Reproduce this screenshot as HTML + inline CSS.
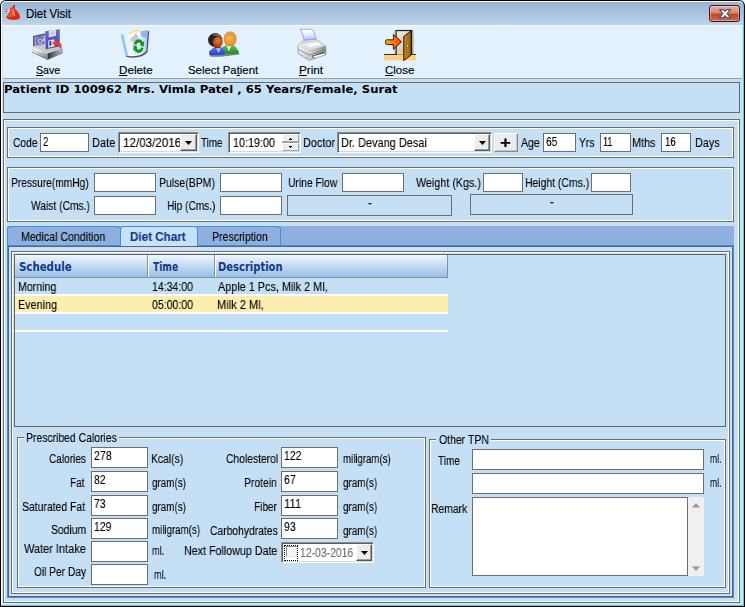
<!DOCTYPE html>
<html><head><meta charset="utf-8"><title>Diet Visit</title>
<style>
html,body{margin:0;padding:0;}
body{width:745px;height:607px;overflow:hidden;position:relative;background:#eef2fa;font-family:"Liberation Sans",sans-serif;font-size:12.5px;color:#000;}
.a{position:absolute;box-sizing:border-box;}
.t{position:absolute;white-space:nowrap;transform-origin:0 0;display:block;}
.m{-webkit-text-stroke:0.12px currentColor;will-change:transform;}
.c{-webkit-text-stroke:0.15px currentColor;}
.t u{text-decoration:underline;text-underline-offset:1px;}
.gw{border:1px solid #6c6c6c;box-shadow:inset 1px 1px 0 #fff,inset -1px -1px 0 #fff;}
.in{background:#fff;border:1px solid #6e6e6e;}
.sunk{background:#fff;border:1px solid;border-color:#8c8c8c #fff #fff #8c8c8c;box-shadow:inset 1px 1px 0 #5f5f5f,inset -1px -1px 0 #d8d8d8;}
.btn{background:#ececec;border:1px solid;border-color:#fff #5a5a5a #5a5a5a #fff;box-shadow:inset -1px -1px 0 #9c9c9c;}
.sbtn{background:#ececec;border:1px solid;border-color:#fff #a8a8a8 #a8a8a8 #fff;}
.btn2{background:#ececec;border:1px solid;border-color:#fff #8a8a8a #8a8a8a #fff;box-shadow:inset -1px -1px 0 #c4c4c4;}
.lbl{background:#c5dff5;border:1px solid #6e6e6e;}
</style></head><body>
<!-- window frame -->
<div class="a" style="left:0;top:0;width:745px;height:607px;background:#000;border-radius:6px 6px 0 0;"></div>
<div class="a" style="left:1px;top:1px;width:743px;height:605px;background:#3fd0f0;border-radius:5px 5px 0 0;"></div>
<div class="a" style="left:1px;top:1px;width:742px;height:604px;background:#fff;border-radius:5px 4px 0 0;"></div>
<div class="a" style="left:2px;top:2px;width:741px;height:603px;background:#d3e4f6;border-radius:4px 4px 0 0;"></div>
<!-- title bar -->
<div class="a" style="left:2px;top:2px;width:741px;height:23px;background:linear-gradient(#98b4d4,#bdd4eb);border-radius:4px 4px 0 0;"></div>
<div class="a" style="left:2px;top:25px;width:741px;height:1px;background:#f4f9fe;"></div>
<!-- app icon -->
<svg class="a" style="left:5px;top:4px" width="16" height="16" viewBox="0 0 16 16"><path d="M1.2 13.4 L2.8 10.6 L4.4 8.2 L4.8 5.6 L5.6 3.2 L6.8 4 L8.6 1 L10.2 1.4 L9.6 4 L10.8 6.4 L12.6 7.4 L14.2 10 L15.2 13 L14 15.2 L8 15.9 L3.4 15.2 Z" fill="#dc2a0c"/><path d="M5.4 4.6 L9 4.8 L9.6 7.8 L10.4 11.8 L8.4 12.6 L6.4 8.4 Z" fill="#ff8a8a" opacity=".85"/><path d="M5.6 5.4h2.6v.8h-2.6z M5.8 7h1.6v.7h-1.6z" fill="#e83030"/><path d="M2.2 11.6 L5.8 8.6 L7.4 12.6 L4 13.6Z" fill="#ec6a2a" opacity=".75"/><path d="M3.2 5.6 L4.6 5.2 L4.4 8.4 L3.4 8.6Z" fill="#f6e4dc"/><path d="M8.4 1.2 L10.2 1.4 L9.8 2.8 L8.8 2.6Z" fill="#b43c08"/><circle cx="1.3" cy="5.3" r=".7" fill="#e0501c"/><circle cx="1.3" cy="7.4" r=".7" fill="#c8440c"/><path d="M10.2 5.6 L12 6 L10.6 6.8Z" fill="#e8401c"/><path d="M11 9 L12.6 8.6 L13 10 L11.4 10.4Z" fill="#c4540c" opacity=".8"/></svg>
<!-- close button -->
<div class="a" style="left:709px;top:5px;width:31px;height:17px;border:1px solid #43161e;border-radius:3px;background:linear-gradient(#e8aea0 0%,#d88472 47%,#c0442a 53%,#cf6a4c 100%);box-shadow:inset 0 0 0 1px rgba(255,255,255,.35);"></div>
<svg class="a" style="left:716.6px;top:7.6px" width="16" height="12" viewBox="0 0 16 12"><path d="M2.6 1.6 L6.3 1.6 L8 3.4 L9.7 1.6 L13.4 1.6 L10.1 5.6 L13.6 9.8 L9.8 9.8 L8 7.8 L6.2 9.8 L2.4 9.8 L5.9 5.6 Z" fill="#fff" stroke="#4a5066" stroke-width="1.1" stroke-linejoin="round"/></svg>
<!-- toolbar -->
<div class="a" style="left:3px;top:26px;width:739px;height:52px;background:#e2f1fc;"></div>
<div class="a" style="left:3px;top:78px;width:739px;height:1px;background:#9f9f9f;"></div>
<div class="a" style="left:3px;top:79px;width:739px;height:524px;background:#c5dff5;"></div>
<!-- save icon -->
<svg class="a" style="left:28px;top:26px" width="40" height="36" viewBox="0 0 674 607">
<defs>
<linearGradient id="sv1" x1="0" y1="0" x2="0.4" y2="1"><stop offset="0" stop-color="#d8d8d8"/><stop offset="0.35" stop-color="#f6f6f6"/><stop offset="0.75" stop-color="#b4b4b4"/><stop offset="1" stop-color="#8c8c8c"/></linearGradient>
<linearGradient id="sv2" x1="0" y1="0" x2="1" y2="0"><stop offset="0" stop-color="#303030"/><stop offset="0.6" stop-color="#8a8a8a"/><stop offset="1" stop-color="#c4c4cc"/></linearGradient>
<linearGradient id="sv3" x1="0" y1="0" x2="0" y2="1"><stop offset="0" stop-color="#6868cc"/><stop offset="1" stop-color="#4646b6"/></linearGradient>
</defs>
<path d="M84 168 L290 122 L290 350 L84 345Z" fill="#5c5c66"/>
<path d="M106 190 L290 150 L290 345 L106 335Z" fill="#9696d4"/>
<ellipse cx="205" cy="258" rx="60" ry="66" fill="#a8a8dc" stroke="#6868b0" stroke-width="26"/>
<ellipse cx="205" cy="258" rx="16" ry="18" fill="#5c5ca8"/>
<path d="M232 250 L286 172 L290 262Z" fill="#c0c0ea"/>
<path d="M70 345 L300 300 L585 375 L330 465Z" fill="#cacace"/>
<path d="M70 345 L330 465 L330 565 L70 440Z" fill="url(#sv1)"/>
<path d="M330 465 L585 375 L585 452 L330 565Z" fill="url(#sv2)"/>
<path d="M70 398 L330 520" stroke="#9a9a9a" stroke-width="9"/>
<path d="M585 380 L585 452 L540 472 L540 396Z" fill="#a4a4e2"/>
<path d="M66 438 L330 568 L588 452" fill="none" stroke="#2c2c2c" stroke-width="13" stroke-dasharray="30 14" opacity=".85"/>
<path d="M290 90 L535 55 L535 345 L300 390Z" fill="url(#sv3)"/>
<path d="M350 80 L470 62 L470 165 L350 188Z" fill="#e8e8e8"/>
<path d="M366 100 L455 88 L455 142 L366 156Z" fill="#cdcdcd"/>
<path d="M340 245 L445 225 L445 345 L340 368Z" fill="#dadae2"/>
<path d="M362 258 L392 252 L392 328 L362 334Z" fill="#2a2a9c"/>
<path d="M405 290 L478 238 L478 272 C540 262 585 300 560 385 L528 372 C545 320 520 305 478 312 L478 342Z" fill="#ff3a12"/>
</svg>
<!-- delete icon -->
<svg class="a" style="left:115px;top:26px" width="40" height="36" viewBox="0 0 674 607">
<defs>
<linearGradient id="dl1" x1="0" y1="0" x2="1" y2="0"><stop offset="0" stop-color="#8cc0f4"/><stop offset="0.12" stop-color="#c4e2fa"/><stop offset="0.35" stop-color="#f4fbff"/><stop offset="0.7" stop-color="#e2f2fd"/><stop offset="1" stop-color="#a2caf2"/></linearGradient>
</defs>
<path d="M118 165 L578 84 L550 428 C520 505 330 562 188 518Z" fill="#3c3c3c" opacity=".85"/>
<path d="M100 150 L555 68 L530 415 C500 480 330 540 175 495Z" fill="url(#dl1)"/>
<path d="M425 92 L550 70 L528 205 L445 172Z" fill="#8cb6f0"/>
<path d="M222 108 L410 52 L434 165 L292 262 L240 192Z" fill="#fffbe6"/>
<path d="M222 108 L410 52 L414 82 L232 136Z" fill="#ffd98a"/>
<path d="M238 170 L322 182 L292 260Z" fill="#fff0a4"/>
<path d="M352 118 L394 184 L345 482 L222 272Z" fill="#c8c2e8"/>
<path d="M296 250 L345 482 L222 272Z" fill="#eceaf6"/>
<path d="M100 150 L140 143 L225 500 L175 495Z" fill="#8ec2f4" opacity=".9"/>
<path d="M140 143 L230 130 L330 490 L225 500Z" fill="#e8f5fe" opacity=".75"/>
<g transform="translate(400 338) scale(0.95 1.3) translate(-400 -335)"><g fill="none" stroke="#0a9a12" stroke-width="42"><path d="M336 312 A68 68 0 0 1 459 301"/><path d="M464 358 A68 68 0 0 1 341 369"/></g>
<path d="M486 345 L418 322 L498 270Z M314 325 L382 348 L302 400Z" fill="#0a9a12"/></g>
</svg>
<!-- people icon -->
<svg class="a" style="left:203px;top:26px" width="40" height="36" viewBox="0 0 674 607">
<defs>
<radialGradient id="pp1" cx=".45" cy=".4" r=".6"><stop offset="0" stop-color="#ffb458"/><stop offset="1" stop-color="#f08c1c"/></radialGradient>
<radialGradient id="pp2" cx=".5" cy=".35" r=".65"><stop offset="0" stop-color="#ee7a28"/><stop offset="1" stop-color="#a43c08"/></radialGradient>
<linearGradient id="pp3" x1="0" y1="0" x2="0" y2="1"><stop offset="0" stop-color="#5a78f4"/><stop offset="1" stop-color="#1c3cd0"/></linearGradient>
<linearGradient id="pp4" x1="0" y1="0" x2="0" y2="1"><stop offset="0" stop-color="#5cc45c"/><stop offset="1" stop-color="#1c8c24"/></linearGradient>
</defs>
<path d="M120 480 L610 455 L610 480 L300 520 L130 520Z" fill="#5a5a5a" opacity=".75"/>
<path d="M330 350 L405 322 L505 322 L545 345 L600 425 L600 468 L355 472Z" fill="url(#pp4)"/>
<path d="M400 330 L482 330 L432 425Z" fill="#fafffa"/>
<rect x="357" y="100" width="200" height="238" rx="92" ry="105" fill="url(#pp1)" stroke="#b87a24" stroke-width="9"/>
<path d="M360 190 C360 120 410 98 457 98 C505 98 555 120 555 190 C500 165 420 165 360 190Z" fill="#d6a04c"/>
<path d="M105 425 L185 360 L330 360 L362 425 L362 482 L105 492Z" fill="url(#pp3)"/>
<path d="M212 370 L298 370 L266 452Z" fill="#a4d4fa"/>
<path d="M200 350 L290 350 L290 375 L200 375Z" fill="#8c1c08"/>
<ellipse cx="205" cy="238" rx="120" ry="118" fill="#242424"/>
<path d="M150 150 C200 110 280 110 320 200 C250 160 200 170 150 150Z" fill="#6a6a6a"/>
<ellipse cx="250" cy="272" rx="82" ry="90" fill="url(#pp2)"/>
</svg>
<!-- print icon -->
<svg class="a" style="left:292px;top:26px" width="40" height="36" viewBox="0 0 674 607">
<defs>
<linearGradient id="pr1" x1="0" y1="0" x2="0" y2="1"><stop offset="0" stop-color="#ffffff"/><stop offset="0.4" stop-color="#eef2ff"/><stop offset="1" stop-color="#a8bcff"/></linearGradient>
<linearGradient id="pr2" x1="0" y1="0" x2="1" y2="1"><stop offset="0" stop-color="#fafafa"/><stop offset="1" stop-color="#c2c2c2"/></linearGradient>
<linearGradient id="pr3" x1="0" y1="0" x2="1" y2="0"><stop offset="0" stop-color="#d2d2d2"/><stop offset="1" stop-color="#8e8e8e"/></linearGradient>
<linearGradient id="pr4" x1="0" y1="0" x2="1" y2="1"><stop offset="0" stop-color="#f4f4f4"/><stop offset="1" stop-color="#cccccc"/></linearGradient>
</defs>
<path d="M172 240 L420 212 L445 262 L190 295Z" fill="#ececec" stroke="#9a9a9a" stroke-width="8"/>
<path d="M135 55 L335 55 C385 100 385 170 402 222 L205 242 C190 170 180 110 135 55Z" fill="url(#pr1)" stroke="#6464c4" stroke-width="9"/>
<path d="M106 330 C110 298 150 286 180 282 L440 245 L566 338 L290 424Z" fill="url(#pr4)" stroke="#7a7a7a" stroke-width="6"/>
<path d="M250 300 L430 272 L500 320 L300 360Z" fill="#f6f6f6"/>
<path d="M105 328 L290 422 L290 572 L105 462Z" fill="url(#pr2)"/>
<path d="M290 422 L566 338 L566 482 L290 572Z" fill="url(#pr3)"/>
<path d="M105 394 L290 490 L566 404" fill="none" stroke="#5e5e5e" stroke-width="10"/>
<path d="M340 500 L540 440 L540 470 L340 532Z" fill="#3a3a3a"/>
<path d="M352 512 L540 458 L562 488 L392 552Z" fill="#f6f6f6"/>
<path d="M338 508 L392 552" stroke="#6464d4" stroke-width="12"/>
<path d="M490 390 L526 380 L526 416 L490 426Z" fill="#44c444"/>
<path d="M102 330 L102 464 L290 578 L570 486 L570 340" fill="none" stroke="#4a4a4a" stroke-width="9" stroke-linejoin="round" opacity=".85"/>
</svg>
<!-- close icon -->
<svg class="a" style="left:380px;top:26px" width="40" height="36" viewBox="0 0 674 607">
<defs>
<linearGradient id="cl1" x1="0" y1="0" x2="1" y2="1"><stop offset="0" stop-color="#f0ece0"/><stop offset="1" stop-color="#bcb8ac"/></linearGradient>
<linearGradient id="cl2" x1="0" y1="0" x2="1" y2="0"><stop offset="0" stop-color="#ffb400"/><stop offset="1" stop-color="#ff3c10"/></linearGradient>
<linearGradient id="cl3" x1="0" y1="0" x2="1" y2="0"><stop offset="0" stop-color="#c08420"/><stop offset="1" stop-color="#9c640c"/></linearGradient>
<pattern id="clp" width="34" height="34" patternUnits="userSpaceOnUse"><rect width="34" height="34" fill="#ffe8c4"/><rect width="17" height="17" fill="#ffb548"/><rect x="17" y="17" width="17" height="17" fill="#ffb548"/></pattern>
</defs>
<rect x="240" y="62" width="332" height="415" fill="#c4c4c4"/>
<rect x="65" y="480" width="540" height="100" fill="url(#clp)"/>
<rect x="285" y="430" width="120" height="55" fill="url(#clp)"/>
<rect x="272" y="78" width="262" height="395" fill="url(#cl1)" stroke="#000" stroke-width="16"/>
<rect x="285" y="430" width="115" height="50" fill="url(#clp)"/>
<path d="M65 480 L282 480 M530 480 L605 480" stroke="#000" stroke-width="14"/>
<path d="M130 320 L235 320 L235 400 L280 360 L250 340Z" fill="#9a9a9a" opacity=".7"/>
<path d="M110 232 Q92 232 92 272 Q92 312 110 312 L226 312 L226 392 L362 266 L226 142 L226 232Z" fill="url(#cl2)" stroke="#000" stroke-width="13" stroke-linejoin="round"/>
<path d="M400 176 L525 82 L525 490 L400 584Z" fill="url(#cl3)" stroke="#000" stroke-width="14" stroke-linejoin="round"/>
<ellipse cx="462" cy="336" rx="17" ry="24" fill="#f2f29c" stroke="#3c2c00" stroke-width="8"/>
</svg>

<!-- patient box -->
<div class="a" style="left:3px;top:82px;width:737px;height:31px;border:1px solid #6a6a6a;"></div>
<!-- outer panel -->
<div class="a gw" style="left:3px;top:119px;width:737px;height:484px;"></div>
<!-- group 1 -->
<div class="a gw" style="left:7px;top:127px;width:727px;height:31px;"></div>
<div class="a in" style="left:40px;top:133px;width:49px;height:19px;"></div>
<div class="a sunk" style="left:118px;top:132px;width:81px;height:21px;"></div>
<div class="a btn" style="left:180px;top:134px;width:17px;height:17px;z-index:5;"></div>
<svg class="a" style="left:185px;top:141px;z-index:6" width="7" height="4"><path d="M0 0h7l-3.5 4z" fill="#000"/></svg>
<div class="a sunk" style="left:228px;top:132px;width:73px;height:21px;"></div>
<div class="a" style="left:282px;top:134px;width:17px;height:17px;background:#9a9a9a;"></div>
<div class="a sbtn" style="left:282px;top:134px;width:17px;height:8px;"></div>
<div class="a sbtn" style="left:282px;top:143px;width:17px;height:8px;"></div>
<svg class="a" style="left:289px;top:138px" width="3" height="2"><path d="M1 0h1v1h1v1h-3v-1h1z" fill="#000"/></svg>
<svg class="a" style="left:289px;top:146px" width="3" height="2"><path d="M0 0h3v1h-1v1h-1v-1h-1z" fill="#000"/></svg>
<div class="a sunk" style="left:337px;top:132px;width:155px;height:21px;"></div>
<div class="a btn" style="left:474px;top:134px;width:16px;height:17px;"></div>
<svg class="a" style="left:479px;top:141px" width="7" height="4"><path d="M0 0h7l-3.5 4z" fill="#000"/></svg>
<div class="a btn2" style="left:494px;top:133px;width:24px;height:19px;"></div>

<div class="a in" style="left:543px;top:133px;width:33px;height:19px;"></div>
<div class="a in" style="left:600px;top:133px;width:31px;height:19px;"></div>
<div class="a in" style="left:661px;top:133px;width:30px;height:19px;"></div>
<!-- group 2 -->
<div class="a gw" style="left:7px;top:167px;width:727px;height:55px;"></div>
<div class="a in" style="left:94px;top:173px;width:62px;height:19px;"></div>
<div class="a in" style="left:220px;top:173px;width:62px;height:19px;"></div>
<div class="a in" style="left:342px;top:173px;width:62px;height:19px;"></div>
<div class="a in" style="left:483px;top:173px;width:40px;height:19px;"></div>
<div class="a in" style="left:591px;top:173px;width:40px;height:19px;"></div>
<div class="a in" style="left:94px;top:196px;width:62px;height:19px;"></div>
<div class="a in" style="left:220px;top:196px;width:62px;height:19px;"></div>
<div class="a lbl" style="left:287px;top:195px;width:165px;height:21px;"></div>
<div class="a lbl" style="left:470px;top:194px;width:163px;height:21px;"></div>
<!-- tab strip -->
<div class="a" style="left:7px;top:226px;width:727px;height:20px;background:#8fb0de;"></div>
<div class="a" style="left:7px;top:226px;width:114px;height:20px;border:1px solid #3a8ff0;border-bottom:none;border-radius:4px 4px 0 0;"></div>
<div class="a" style="left:197px;top:226px;width:84px;height:20px;border:1px solid #3a8ff0;border-bottom:none;border-left:none;border-radius:0 4px 0 0;"></div>
<!-- tab page -->
<div class="a" style="left:7px;top:245px;width:727px;height:353px;border:1px solid #3a8ff0;box-shadow:inset 0 0 0 1px #646464;background:#c8e1f7;"></div>
<div class="a" style="left:120px;top:226px;width:78px;height:20px;border:1px solid #3a8ff0;border-bottom:none;border-radius:4px 4px 0 0;background:#c9e1f7;"></div>
<!-- inner panel -->
<div class="a gw" style="left:11px;top:251px;width:719px;height:343px;background:#c5dff5;"></div>
<!-- grid -->
<div class="a" style="left:14px;top:254px;width:712px;height:173px;border:1px solid #646464;background:#c5dff5;"></div>
<div class="a" style="left:15px;top:255px;width:433px;height:23px;background:linear-gradient(#eff5fc 0%,#c6dbf3 48%,#95c0ec 100%);border-bottom:1px solid #8e8e8e;border-right:1px solid #8e8e8e;"></div>
<div class="a" style="left:147px;top:255px;width:2px;height:22px;border-left:1px solid #8e8e8e;border-right:1px solid #fff;"></div>
<div class="a" style="left:214px;top:255px;width:2px;height:22px;border-left:1px solid #8e8e8e;border-right:1px solid #fff;"></div>
<div class="a" style="left:15px;top:294px;width:433px;height:20px;background:#fdeeb0;border-top:2px solid #fff;border-bottom:2px solid #fff;"></div>
<div class="a" style="left:15px;top:330px;width:433px;height:2px;background:#fff;"></div>
<!-- prescribed calories group -->
<div class="a gw" style="left:17px;top:437px;width:409px;height:151px;"></div>
<div class="a" style="left:24px;top:437px;width:95px;height:2px;background:#c5dff5;"></div>
<div class="a in" style="left:91px;top:447px;width:57px;height:21px;"></div>
<div class="a in" style="left:91px;top:471px;width:57px;height:21px;"></div>
<div class="a in" style="left:91px;top:495px;width:57px;height:21px;"></div>
<div class="a in" style="left:91px;top:518px;width:57px;height:21px;"></div>
<div class="a in" style="left:91px;top:541px;width:57px;height:21px;"></div>
<div class="a in" style="left:91px;top:564px;width:57px;height:21px;"></div>
<div class="a in" style="left:281px;top:447px;width:57px;height:21px;"></div>
<div class="a in" style="left:281px;top:471px;width:57px;height:21px;"></div>
<div class="a in" style="left:281px;top:495px;width:57px;height:21px;"></div>
<div class="a in" style="left:281px;top:518px;width:57px;height:21px;"></div>
<div class="a sunk" style="left:281px;top:542px;width:93px;height:21px;"></div>
<div class="a" style="left:284px;top:545px;width:14px;height:16px;border:1px dotted #000;"></div>
<div class="a" style="left:286px;top:546px;width:11px;height:11px;background:#f6f6f6;border:1px solid;border-color:#8a8a8a #e4e4e4 #e4e4e4 #8a8a8a;"></div>
<div class="a btn" style="left:356px;top:544px;width:16px;height:17px;"></div>
<svg class="a" style="left:361px;top:551px" width="7" height="4"><path d="M0 0h7l-3.5 4z" fill="#000"/></svg>
<!-- other tpn group -->
<div class="a gw" style="left:429px;top:439px;width:297px;height:149px;"></div>
<div class="a" style="left:436px;top:439px;width:55px;height:2px;background:#c5dff5;"></div>
<div class="a in" style="left:472px;top:449px;width:232px;height:21px;"></div>
<div class="a in" style="left:472px;top:473px;width:232px;height:21px;"></div>
<div class="a in" style="left:472px;top:497px;width:232px;height:79px;"></div>
<div class="a" style="left:688px;top:498px;width:16px;height:77px;background:#f0f0f0;"></div>
<div class="a" style="left:687px;top:497px;width:1px;height:79px;background:#6e6e6e;"></div>
<div class="a" style="left:688px;top:497px;width:17px;height:1px;background:#c5dff5;"></div>
<div class="a" style="left:688px;top:575px;width:17px;height:1px;background:#c5dff5;"></div>
<div class="a" style="left:704px;top:497px;width:1px;height:79px;background:#c5dff5;"></div>
<div class="a" style="left:688px;top:497px;width:16px;height:79px;background:#f0f0f0;"></div>
<svg class="a" style="left:692px;top:503px" width="8" height="5"><path d="M0 4.5h8l-4-4.5z" fill="#9a9a9a"/></svg>
<svg class="a" style="left:692px;top:566px" width="8" height="5"><path d="M0 0.5h8l-4 4.5z" fill="#9a9a9a"/></svg>
<span class="t c" style="left:25.50px;top:7.00px;font-size:12px;line-height:14px;transform:scaleX(0.9520);">Diet Visit</span>
<span class="t c" style="left:36.20px;top:64.20px;font-size:11.5px;line-height:12px;transform:scaleX(0.9219);"><u>S</u>ave</span>
<span class="t c" style="left:119.00px;top:64.20px;font-size:11.5px;line-height:12px;transform:scaleX(1.0138);"><u>D</u>elete</span>
<span class="t c" style="left:188.20px;top:64.20px;font-size:11.5px;line-height:12px;transform:scaleX(0.9880);">Select Pa<u>t</u>ient</span>
<span class="t c" style="left:299.40px;top:64.20px;font-size:11.5px;line-height:12px;transform:scaleX(1.0184);"><u>P</u>rint</span>
<span class="t c" style="left:385.30px;top:64.20px;font-size:11.5px;line-height:12px;transform:scaleX(0.9998);"><u>C</u>lose</span>
<span class="t" style="left:3.64px;top:83.40px;font-size:11px;line-height:13px;font-weight:bold;font-family:'DejaVu Sans', 'Liberation Sans', sans-serif;transform:scaleX(1.0584);">Patient ID 100962 Mrs. Vimla Patel , 65 Years/Female, Surat</span>
<span class="t m" style="left:12.50px;top:136.30px;font-size:12.5px;line-height:14px;transform:scaleX(0.8186);">Code</span>
<span class="t m" style="left:42.70px;top:135.00px;font-size:12.5px;line-height:14px;transform:scaleX(0.7571);">2</span>
<span class="t m" style="left:123.30px;top:136.30px;font-size:12.5px;line-height:14px;transform:scaleX(0.9300);">12/03/2016</span>
<span class="t m" style="left:91.62px;top:136.30px;font-size:12.5px;line-height:14px;transform:scaleX(0.8840);">Date</span>
<span class="t m" style="left:201.00px;top:136.30px;font-size:12.5px;line-height:14px;transform:scaleX(0.7858);">Time</span>
<span class="t m" style="left:232.50px;top:136.30px;font-size:12.5px;line-height:14px;transform:scaleX(0.8623);">10:19:00</span>
<span class="t m" style="left:303.13px;top:136.30px;font-size:12.5px;line-height:14px;transform:scaleX(0.8695);">Doctor</span>
<span class="t m" style="left:341.12px;top:136.30px;font-size:12.5px;line-height:14px;transform:scaleX(0.8759);">Dr. Devang Desai</span>
<span class="t m" style="left:500.00px;top:133.00px;font-size:17px;line-height:19px;font-weight:bold;transform:scaleX(1.1000);">+</span>
<span class="t m" style="left:521.40px;top:136.30px;font-size:12.5px;line-height:14px;transform:scaleX(0.8435);">Age</span>
<span class="t m" style="left:545.80px;top:135.00px;font-size:12.5px;line-height:14px;transform:scaleX(0.8099);">65</span>
<span class="t m" style="left:578.50px;top:136.30px;font-size:12.5px;line-height:14px;transform:scaleX(0.8216);">Yrs</span>
<span class="t m" style="left:603.00px;top:135.00px;font-size:12.5px;line-height:14px;transform:scaleX(0.7294);">11</span>
<span class="t m" style="left:631.84px;top:136.30px;font-size:12.5px;line-height:14px;transform:scaleX(0.8631);">Mths</span>
<span class="t m" style="left:664.50px;top:135.00px;font-size:12.5px;line-height:14px;transform:scaleX(0.7669);">16</span>
<span class="t m" style="left:694.93px;top:136.30px;font-size:12.5px;line-height:14px;transform:scaleX(0.8667);">Days</span>
<span class="t m" style="left:11.18px;top:176.00px;font-size:12.5px;line-height:14px;transform:scaleX(0.8166);">Pressure(mmHg)</span>
<span class="t m" style="left:159.16px;top:176.00px;font-size:12.5px;line-height:14px;transform:scaleX(0.8395);">Pulse(BPM)</span>
<span class="t m" style="left:287.50px;top:176.00px;font-size:12.5px;line-height:14px;transform:scaleX(0.8236);">Urine Flow</span>
<span class="t m" style="left:416.00px;top:176.00px;font-size:12.5px;line-height:14px;transform:scaleX(0.8596);">Weight (Kgs.)</span>
<span class="t m" style="left:524.67px;top:176.00px;font-size:12.5px;line-height:14px;transform:scaleX(0.8323);">Height (Cms.)</span>
<span class="t m" style="left:31.25px;top:199.00px;font-size:12.5px;line-height:14px;transform:scaleX(0.8207);">Waist (Cms.)</span>
<span class="t m" style="left:166.69px;top:199.00px;font-size:12.5px;line-height:14px;transform:scaleX(0.8112);">Hip (Cms.)</span>
<span class="t m" style="left:367.50px;top:196.00px;font-size:12.5px;line-height:14px;transform:scaleX(0.8900);">-</span>
<span class="t m" style="left:550.00px;top:195.00px;font-size:12.5px;line-height:14px;transform:scaleX(0.8900);">-</span>
<span class="t m" style="left:20.85px;top:230.00px;font-size:12.5px;line-height:14px;transform:scaleX(0.8465);">Medical Condition</span>
<span class="t m" style="left:129.80px;top:230.00px;font-size:12.5px;line-height:14px;font-weight:bold;color:#10398a;transform:scaleX(0.9329);">Diet Chart</span>
<span class="t m" style="left:211.65px;top:230.00px;font-size:12.5px;line-height:14px;transform:scaleX(0.8456);">Prescription</span>
<span class="t" style="left:18.75px;top:260.00px;font-size:12px;line-height:14px;font-weight:bold;color:#10398a;font-family:'DejaVu Sans', 'Liberation Sans', sans-serif;transform:scaleX(0.8511);">Schedule</span>
<span class="t" style="left:152.50px;top:260.00px;font-size:12px;line-height:14px;font-weight:bold;color:#10398a;font-family:'DejaVu Sans', 'Liberation Sans', sans-serif;transform:scaleX(0.7621);">Time</span>
<span class="t" style="left:217.92px;top:260.00px;font-size:12px;line-height:14px;font-weight:bold;color:#10398a;font-family:'DejaVu Sans', 'Liberation Sans', sans-serif;transform:scaleX(0.8315);">Description</span>
<span class="t m" style="left:17.90px;top:280.00px;font-size:12.5px;line-height:14px;transform:scaleX(0.8483);">Morning</span>
<span class="t m" style="left:152.00px;top:280.00px;font-size:12.5px;line-height:14px;transform:scaleX(0.8418);">14:34:00</span>
<span class="t m" style="left:218.25px;top:280.00px;font-size:12.5px;line-height:14px;transform:scaleX(0.8674);">Apple 1 Pcs, Milk 2 Ml,</span>
<span class="t m" style="left:17.89px;top:298.00px;font-size:12.5px;line-height:14px;transform:scaleX(0.8650);">Evening</span>
<span class="t m" style="left:152.00px;top:298.00px;font-size:12.5px;line-height:14px;transform:scaleX(0.8418);">05:00:00</span>
<span class="t m" style="left:217.36px;top:298.00px;font-size:12.5px;line-height:14px;transform:scaleX(0.8869);">Milk 2 Ml,</span>
<span class="t m" style="left:25.67px;top:430.80px;font-size:12.5px;line-height:14px;transform:scaleX(0.8324);">Prescribed Calories</span>
<span class="t m" style="left:48.75px;top:452.00px;font-size:12.5px;line-height:14px;transform:scaleX(0.8059);">Calories</span>
<span class="t m" style="left:70.45px;top:476.00px;font-size:12.5px;line-height:14px;transform:scaleX(0.7989);">Fat</span>
<span class="t m" style="left:21.70px;top:500.00px;font-size:12.5px;line-height:14px;transform:scaleX(0.8326);">Saturated Fat</span>
<span class="t m" style="left:50.60px;top:523.00px;font-size:12.5px;line-height:14px;transform:scaleX(0.8292);">Sodium</span>
<span class="t m" style="left:24.20px;top:542.00px;font-size:12.5px;line-height:14px;transform:scaleX(0.8787);">Water Intake</span>
<span class="t m" style="left:33.50px;top:565.00px;font-size:12.5px;line-height:14px;transform:scaleX(0.8136);">Oil Per Day</span>
<span class="t m" style="left:93.70px;top:449.00px;font-size:12.5px;line-height:14px;transform:scaleX(0.8467);">278</span>
<span class="t m" style="left:93.70px;top:473.00px;font-size:12.5px;line-height:14px;transform:scaleX(0.8243);">82</span>
<span class="t m" style="left:93.70px;top:497.00px;font-size:12.5px;line-height:14px;transform:scaleX(0.8243);">73</span>
<span class="t m" style="left:94.10px;top:520.00px;font-size:12.5px;line-height:14px;transform:scaleX(0.8276);">129</span>
<span class="t m" style="left:150.92px;top:452.00px;font-size:12.5px;line-height:14px;transform:scaleX(0.8283);">Kcal(s)</span>
<span class="t m" style="left:151.75px;top:476.00px;font-size:12.5px;line-height:14px;transform:scaleX(0.7869);">gram(s)</span>
<span class="t m" style="left:151.75px;top:500.00px;font-size:12.5px;line-height:14px;transform:scaleX(0.7869);">gram(s)</span>
<span class="t m" style="left:151.75px;top:523.00px;font-size:12.5px;line-height:14px;transform:scaleX(0.7763);">miligram(s)</span>
<span class="t m" style="left:151.75px;top:544.00px;font-size:12.5px;line-height:14px;transform:scaleX(0.7258);">ml.</span>
<span class="t m" style="left:153.75px;top:567.50px;font-size:12.5px;line-height:14px;transform:scaleX(0.7258);">ml.</span>
<span class="t m" style="left:225.50px;top:452.00px;font-size:12.5px;line-height:14px;transform:scaleX(0.8247);">Cholesterol</span>
<span class="t m" style="left:244.17px;top:476.00px;font-size:12.5px;line-height:14px;transform:scaleX(0.8279);">Protein</span>
<span class="t m" style="left:254.19px;top:500.00px;font-size:12.5px;line-height:14px;transform:scaleX(0.8054);">Fiber</span>
<span class="t m" style="left:209.50px;top:524.00px;font-size:12.5px;line-height:14px;transform:scaleX(0.8258);">Carbohydrates</span>
<span class="t m" style="left:183.64px;top:544.00px;font-size:12.5px;line-height:14px;transform:scaleX(0.8555);">Next Followup Date</span>
<span class="t m" style="left:283.90px;top:449.00px;font-size:12.5px;line-height:14px;transform:scaleX(0.8324);">122</span>
<span class="t m" style="left:283.70px;top:473.00px;font-size:12.5px;line-height:14px;transform:scaleX(0.8458);">67</span>
<span class="t m" style="left:283.90px;top:497.00px;font-size:12.5px;line-height:14px;transform:scaleX(0.9082);">111</span>
<span class="t m" style="left:283.70px;top:520.00px;font-size:12.5px;line-height:14px;transform:scaleX(0.8458);">93</span>
<span class="t m" style="left:343.00px;top:452.00px;font-size:12.5px;line-height:14px;transform:scaleX(0.7707);">miligram(s)</span>
<span class="t m" style="left:343.00px;top:476.00px;font-size:12.5px;line-height:14px;transform:scaleX(0.7927);">gram(s)</span>
<span class="t m" style="left:343.00px;top:500.00px;font-size:12.5px;line-height:14px;transform:scaleX(0.7927);">gram(s)</span>
<span class="t m" style="left:343.00px;top:524.00px;font-size:12.5px;line-height:14px;transform:scaleX(0.7927);">gram(s)</span>
<span class="t m" style="left:300.30px;top:546.00px;font-size:12.5px;line-height:14px;color:#707070;transform:scaleX(0.8314);">12-03-2016</span>
<span class="t m" style="left:438.75px;top:433.00px;font-size:12.5px;line-height:14px;transform:scaleX(0.8374);">Other TPN</span>
<span class="t m" style="left:438.00px;top:454.00px;font-size:12.5px;line-height:14px;transform:scaleX(0.8041);">Time</span>
<span class="t m" style="left:430.87px;top:502.00px;font-size:12.5px;line-height:14px;transform:scaleX(0.8275);">Remark</span>
<span class="t m" style="left:709.80px;top:451.60px;font-size:12.5px;line-height:14px;transform:scaleX(0.6918);">ml.</span>
<span class="t m" style="left:709.80px;top:475.70px;font-size:12.5px;line-height:14px;transform:scaleX(0.6918);">ml.</span>
</body></html>
